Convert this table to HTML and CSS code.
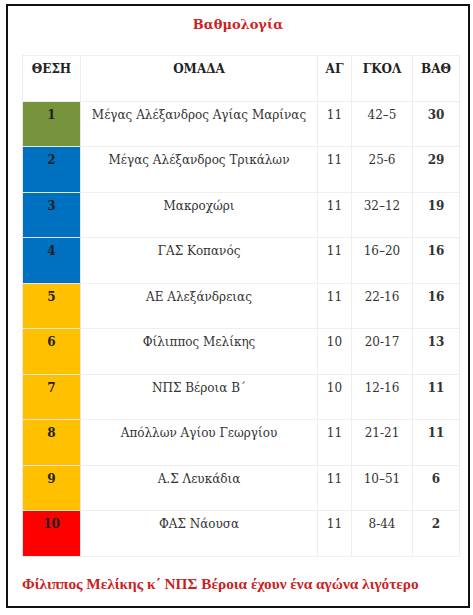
FILE: index.html
```html
<!DOCTYPE html>
<html lang="el">
<head>
<meta charset="UTF-8" />
<meta name="viewport" content="width=device-width, initial-scale=1" />
<title>Βαθμολογία</title>
<link rel="stylesheet" href="styles.css">
</head>
<body>

<div class="card">
  <h2 class="title">Βαθμολογία</h2>

  <table class="standings">
    <thead>
      <tr>
        <th class="pos">ΘΕΣΗ</th>
        <th class="team">ΟΜΑΔΑ</th>
        <th class="games">ΑΓ</th>
        <th class="goals">ΓΚΟΛ</th>
        <th class="pts">ΒΑΘ</th>
      </tr>
    </thead>
    <tbody>
      <tr><td class="pos green">1</td><td>Μέγας Αλέξανδρος Αγίας Μαρίνας</td><td>11</td><td>42–5</td><td class="pts">30</td></tr>
      <tr><td class="pos blue">2</td><td>Μέγας Αλέξανδρος Τρικάλων</td><td>11</td><td>25-6</td><td class="pts">29</td></tr>
      <tr><td class="pos blue">3</td><td>Μακροχώρι</td><td>11</td><td>32–12</td><td class="pts">19</td></tr>
      <tr><td class="pos blue">4</td><td>ΓΑΣ Κοπανός</td><td>11</td><td>16–20</td><td class="pts">16</td></tr>
      <tr><td class="pos yellow">5</td><td>ΑΕ Αλεξάνδρειας</td><td>11</td><td>22-16</td><td class="pts">16</td></tr>
      <tr><td class="pos yellow">6</td><td>Φίλιππος Μελίκης</td><td>10</td><td>20-17</td><td class="pts">13</td></tr>
      <tr><td class="pos yellow">7</td><td>ΝΠΣ Βέροια Β΄</td><td>10</td><td>12-16</td><td class="pts">11</td></tr>
      <tr><td class="pos yellow">8</td><td>Απόλλων Αγίου Γεωργίου</td><td>11</td><td>21-21</td><td class="pts">11</td></tr>
      <tr><td class="pos yellow">9</td><td>Α.Σ Λευκάδια</td><td>11</td><td>10–51</td><td class="pts">6</td></tr>
      <tr><td class="pos red">10</td><td>ΦΑΣ Νάουσα</td><td>11</td><td>8-44</td><td class="pts">2</td></tr>
    </tbody>
  </table>

  <p class="note">Φίλιππος Μελίκης κ΄ ΝΠΣ Βέροια έχουν ένα αγώνα λιγότερο</p>
</div>

</body>
</html>
```

FILE: styles.css
```css
body { margin: 0; background: #fff; font-family: "DejaVu Serif", "Liberation Serif", serif; color: #333; }
.card { width: 464px; height: 604px; margin: 4px 0 0 6px; border: 2px solid #111; box-sizing: border-box; }
.title { margin: 10px 0 0; font-size: 13px; font-weight: bold; text-align: center; color: #cc1f1f; line-height: 18px; }
.standings { margin: 21px 0 0 14px; width: 437px; border-collapse: collapse; table-layout: fixed; font-size: 12px; }
.standings th, .standings td { border: 1px solid #eeeeee; height: 45.5px; padding: 4px 4px 0; vertical-align: top; text-align: center; line-height: 18px; box-sizing: border-box; }
.standings th { color: #222; font-weight: bold; }
.standings th.pos { width: 58px; }
.standings th.team { width: 237px; }
.standings th.games { width: 34px; }
.standings th.goals { width: 61px; }
.standings th.pts { width: 47px; }
.standings td.pos { font-weight: bold; color: #222; border-color: #e6e6e6; }
.standings td.pts { font-weight: bold; }
.green { background: #77933c; }
.blue { background: #0070c0; }
.yellow { background: #ffc000; }
.red { background: #ff0000; }
.note { margin: 18px 0 0 14px; font-family: "Liberation Serif", serif; font-size: 15.3px; font-weight: bold; color: #cc1f1f; line-height: 18px; }
```
